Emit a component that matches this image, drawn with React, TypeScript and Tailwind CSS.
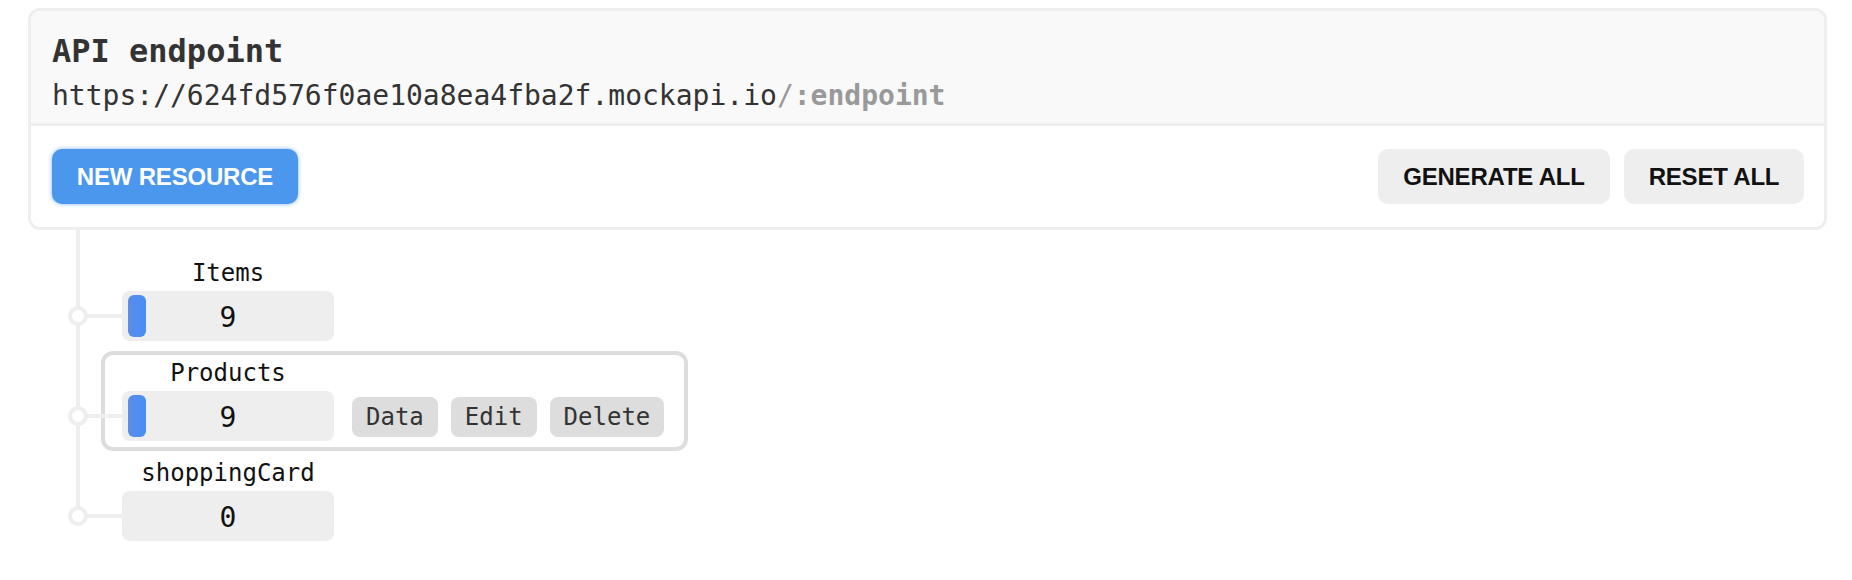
import React from 'react';

interface Resource {
  name: string;
  count: number;
  hasHandle: boolean;
  selected?: boolean;
}

const resources: Resource[] = [
  { name: 'Items', count: 9, hasHandle: true },
  { name: 'Products', count: 9, hasHandle: true, selected: true },
  { name: 'shoppingCard', count: 0, hasHandle: false },
];

const mono = "font-['DejaVu_Sans_Mono',monospace]";

const ResourceRow: React.FC<{ res: Resource }> = ({ res }) => {
  return (
    <div
      className={`relative w-fit border-[4px] rounded-[12px] pl-[17px] pr-[20px] pb-[6px] ${
        res.selected ? 'border-[#dddddd]' : 'border-transparent'
      }`}
    >
      {/* connector + node */}
      <div className="absolute left-[-27px] top-[59px] w-[44px] h-[4px] bg-[#eeeeee]" />
      <div className="absolute left-[-37px] top-[51px] w-[20px] h-[20px] rounded-full border-[4px] border-[#eeeeee] bg-white" />

      <div className="w-[212px] text-center text-[24px] leading-[36px] text-[#111]">{res.name}</div>
      <div className="flex items-center">
        <div className="relative w-[212px] h-[50px] bg-[#eeeeee] rounded-[8px] flex items-center justify-center">
          {res.hasHandle && (
            <div className="absolute left-[6px] top-[4px] w-[18px] h-[42px] rounded-[6px] bg-linear-to-r from-[#5b8de6] to-[#468ef6]" />
          )}
          <span className="text-[28px] leading-none pt-[3px] text-[#111]">{res.count}</span>
        </div>
        {res.selected && (
          <div className="flex items-center gap-[13px] ml-[18px] pt-[2px]">
            {['Data', 'Edit', 'Delete'].map((label) => (
              <button
                key={label}
                className="h-[40px] px-[14px] rounded-[8px] bg-[#dddddd] text-[24px] text-[#333] leading-none"
              >
                {label}
              </button>
            ))}
          </div>
        )}
      </div>
    </div>
  );
};

const App: React.FC = () => {
  return (
    <div className={`w-[1852px] h-[580px] bg-white pt-[8px] ${mono}`}>
      <div className="ml-[28px] mr-[25px] border-[3px] border-[#eeeeee] rounded-[12px] overflow-hidden">
        <div className="bg-[#f9f9f9] px-[21px] pt-[18px] pb-[7px] border-b-[3px] border-[#eeeeee]">
          <div className="text-[32px] leading-[44px] font-bold text-[#333]">API endpoint</div>
          <div className="text-[28px] leading-[40px] pt-[3px] text-[#333]">
            https://624fd576f0ae10a8ea4fba2f.mockapi.io
            <span className="text-[#999]">/</span>
            <span className="text-[#999] font-bold">:endpoint</span>
          </div>
        </div>
        <div className="flex items-center justify-between pl-[21px] pr-[20px] py-[23px] bg-white font-['Liberation_Sans',Arial,sans-serif]">
          <button className="h-[55px] w-[246px] rounded-[10px] bg-[#4b97ee] text-white text-[24px] font-bold tracking-[-0.2px] shadow-[0_0_4px_rgba(75,151,238,0.7)]">
            NEW RESOURCE
          </button>
          <div className="flex items-center gap-[14px]">
            <button className="h-[55px] w-[232px] rounded-[10px] bg-[#eeeeee] text-[#111] text-[24px] font-bold tracking-[-0.2px]">
              GENERATE ALL
            </button>
            <button className="h-[55px] w-[180px] rounded-[10px] bg-[#eeeeee] text-[#111] text-[24px] font-bold tracking-[-0.2px]">
              RESET ALL
            </button>
          </div>
        </div>
      </div>

      <div className="relative ml-[28px] pt-[21px]">
        <div className="absolute left-[48px] top-0 bottom-[35px] w-[4px] bg-[#eeeeee]" />
        <div className="flex flex-col ml-[73px]">
          {resources.map((r) => (
            <ResourceRow key={r.name} res={r} />
          ))}
        </div>
      </div>
    </div>
  );
};

export default App;
